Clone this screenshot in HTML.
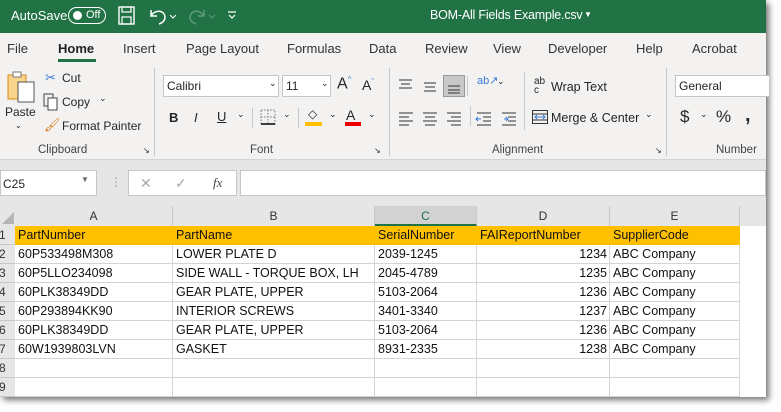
<!DOCTYPE html>
<html><head><style>
*{margin:0;padding:0;box-sizing:border-box}
body{width:781px;height:412px;background:#fff;font-family:"Liberation Sans",sans-serif;position:relative;overflow:hidden;font-size:12px;color:#262626}
.win{position:absolute;left:0;top:0;width:766px;height:397px;background:#e6e6e6;box-shadow:3px 3px 6px rgba(0,0,0,.55)}
.title{position:absolute;left:0;top:0;width:766px;height:33px;background:#217346;color:#fff}
.a{position:absolute;white-space:nowrap}
.tabs{position:absolute;top:33px;left:0;width:766px;height:31px;background:#f3f2f1;font-size:13px;color:#333}
.ribbon{position:absolute;top:64px;left:0;width:766px;height:96px;background:#f3f2f1;border-bottom:1px solid #d4d4d4}
.sep{position:absolute;width:1px;background:#c8c8c8}
.lbl{position:absolute;top:80px;font-size:11.5px;color:#444}
.box{position:absolute;background:#fff;border:1px solid #c6c6c6}
.ch{position:absolute;top:206px;height:20px;background:#e6e6e6;border-right:1px solid #c8c8c8;text-align:center;font-size:12px;line-height:20px;color:#333}
.row{position:absolute;left:15px;width:725px;height:19px;border-bottom:1px solid #d4d4d4;background:#fff}
.c{position:absolute;top:0;height:19px;line-height:19px;font-size:12.5px;padding-left:3px;border-right:1px solid #d4d4d4;color:#111;white-space:nowrap;overflow:hidden}
.rh{position:absolute;left:0;width:15px;height:19px;background:#e6e6e6;font-size:12px;line-height:19px;color:#333;border-bottom:1px solid #c8c8c8;text-indent:-1px}
</style></head><body>
<div class="win">
<div class="title">
<span class="a" style="left:11px;top:8px;font-size:13px">AutoSave</span>
<span class="a" style="left:68px;top:7px;width:38px;height:17px;border:1.5px solid #fff;border-radius:9px"></span>
<span class="a" style="left:73px;top:11px;width:9px;height:9px;border-radius:50%;background:#fff"></span>
<span class="a" style="left:86px;top:9px;font-size:11px;line-height:13px">Off</span>
<svg class="a" style="left:118px;top:6px" width="18" height="20"><rect x="1" y="1" width="15" height="17" fill="none" stroke="#fff" stroke-width="1.4"/><rect x="4" y="1" width="9" height="5" fill="none" stroke="#fff" stroke-width="1.2"/><rect x="4" y="11" width="9" height="7" fill="none" stroke="#fff" stroke-width="1.2"/></svg>
<svg class="a" style="left:148px;top:6px" width="30" height="20"><path d="M3 4v6h6M3 10c3-6 13-7 14 1 0 4-3 6-6 7" fill="none" stroke="#fff" stroke-width="1.5"/><path d="M22 9l3 3 3-3" fill="none" stroke="#fff"/></svg>
<svg class="a" style="left:187px;top:6px" width="30" height="20"><path d="M17 4v6h-6M17 10c-3-6-13-7-14 1 0 4 3 6 6 7" fill="none" stroke="#5c9a7a" stroke-width="1.5"/><path d="M22 9l3 3 3-3" fill="none" stroke="#5c9a7a"/></svg>
<svg class="a" style="left:227px;top:10px" width="10" height="10"><path d="M1 2h8M2 5l3 3 3-3" fill="none" stroke="#fff" stroke-width="1.2"/></svg>
<span class="a" style="left:430px;top:8px;font-size:12.5px;letter-spacing:-0.2px">BOM-All Fields Example.csv</span>
<span class="a" style="left:584px;top:10px;font-size:8px">▼</span>
</div>
<div class="tabs">
<span class="a" style="left:7px;top:8px">File</span>
<span class="a" style="left:58px;top:8px;font-weight:bold;color:#222">Home</span>
<span class="a" style="left:58px;top:26px;width:38px;height:3px;background:#217346"></span>
<span class="a" style="left:123px;top:8px">Insert</span>
<span class="a" style="left:186px;top:8px">Page Layout</span>
<span class="a" style="left:287px;top:8px">Formulas</span>
<span class="a" style="left:369px;top:8px">Data</span>
<span class="a" style="left:425px;top:8px">Review</span>
<span class="a" style="left:493px;top:8px">View</span>
<span class="a" style="left:548px;top:8px">Developer</span>
<span class="a" style="left:636px;top:8px">Help</span>
<span class="a" style="left:692px;top:8px">Acrobat</span>
</div>
<div class="ribbon">
<svg class="a" style="left:6px;top:6px" width="30" height="36"><rect x="2" y="5" width="18" height="24" fill="#f8d58a" stroke="#d98a1c"/><rect x="7" y="2" width="8" height="5" fill="#fff" stroke="#777"/><rect x="12" y="12" width="16" height="20" fill="#fff" stroke="#555"/></svg>
<span class="a" style="left:5px;top:41px;font-size:12px">Paste</span>
<span class="a" style="left:15px;top:57px;font-size:8px">⌄</span>
<span class="a" style="left:45px;top:6px;font-size:13px;color:#3a7bd5">✂</span>
<span class="a" style="left:62px;top:7px">Cut</span>
<svg class="a" style="left:43px;top:29px" width="16" height="18"><rect x="1" y="1" width="9" height="12" fill="none" stroke="#444"/><rect x="5" y="5" width="9" height="12" fill="#fff" stroke="#444"/></svg>
<span class="a" style="left:62px;top:31px">Copy</span>
<span class="a" style="left:99px;top:29px;font-size:9px">⌄</span>
<span class="a" style="left:44px;top:53px;font-size:13px;color:#e07b1c">🖌</span>
<span class="a" style="left:62px;top:55px">Format Painter</span>
<span class="lbl" style="left:38px">Clipboard</span>
<span class="a" style="left:143px;top:82px;font-size:8px">↘</span>
<div class="sep" style="left:154px;top:4px;height:88px"></div>
<div class="box" style="left:163px;top:11px;width:116px;height:22px"><span class="a" style="left:3px;top:3px">Calibri</span><span class="a" style="left:105px;top:2px;font-size:9px">⌄</span></div>
<div class="box" style="left:282px;top:11px;width:49px;height:22px"><span class="a" style="left:3px;top:3px">11</span><span class="a" style="left:38px;top:2px;font-size:9px">⌄</span></div>
<span class="a" style="left:337px;top:11px;font-size:16px">A<sup style="font-size:8px;color:#3a7bd5">^</sup></span>
<span class="a" style="left:362px;top:13px;font-size:14px">A<sup style="font-size:8px;color:#3a7bd5">ˇ</sup></span>
<span class="a" style="left:169px;top:46px;font-weight:bold;font-size:13px">B</span>
<span class="a" style="left:194px;top:46px;font-style:italic;font-size:13px">I</span>
<span class="a" style="left:217px;top:45px;text-decoration:underline;font-size:13px">U</span>
<span class="a" style="left:237px;top:45px;font-size:9px">⌄</span>
<div class="sep" style="left:252px;top:44px;height:20px"></div>
<svg class="a" style="left:260px;top:45px" width="16" height="16"><rect x="1" y="1" width="14" height="14" fill="none" stroke="#777" stroke-dasharray="1.5 1.5"/><path d="M1 15h14" stroke="#000" stroke-width="1.5"/><path d="M8 1v14M1 8h14" stroke="#777" stroke-dasharray="1.5 1.5"/></svg>
<span class="a" style="left:283px;top:45px;font-size:9px">⌄</span>
<div class="sep" style="left:298px;top:44px;height:20px"></div>
<span class="a" style="left:308px;top:43px;font-size:12px">◇</span>
<span class="a" style="left:305px;top:58px;width:17px;height:4px;background:#ffc000"></span>
<span class="a" style="left:329px;top:45px;font-size:9px">⌄</span>
<span class="a" style="left:346px;top:43px;font-size:14px">A</span>
<span class="a" style="left:345px;top:58px;width:16px;height:4px;background:#e00"></span>
<span class="a" style="left:368px;top:45px;font-size:9px">⌄</span>
<span class="lbl" style="left:250px">Font</span>
<span class="a" style="left:374px;top:82px;font-size:8px">↘</span>
<div class="sep" style="left:389px;top:4px;height:88px"></div>
<svg class="a" style="left:398px;top:11px" width="122" height="60"><path d="M1 5h13M3 9h9M1 13h13M26 8h12M27 12h10M26 16h12" stroke="#333"/><rect x="45.5" y="0.5" width="21" height="21" fill="#c8c8c8" stroke="#999"/><path d="M50 11h12M50 15h12M50 18h12" stroke="#333"/>
<path d="M1 38h14M1 42h10M1 46h14M1 50h10M25 38h14M27 42h10M25 46h14M27 50h10M49 38h14M53 42h10M49 46h14M53 50h10M79 38h14M79 50h14M85 42h8M85 46h8M104 38h14M104 50h14M110 42h8M110 46h8" stroke="#333"/><path d="M83 44h-5M80 42l-2 2 2 2M106 44h4M108 42l2 2-2 2" stroke="#3a7bd5" fill="none"/></svg>
<div class="sep" style="left:467px;top:12px;height:20px"></div>
<div class="sep" style="left:470px;top:42px;height:20px"></div>
<span class="a" style="left:477px;top:10px;font-size:11px;color:#3a7bd5">ab↗</span>
<span class="a" style="left:497px;top:12px;font-size:9px">⌄</span>
<div class="sep" style="left:524px;top:8px;height:58px"></div>
<span class="a" style="left:534px;top:13px;font-size:10px;line-height:9px">ab<br>c</span>
<span class="a" style="left:551px;top:16px;font-size:12.5px">Wrap Text</span>
<svg class="a" style="left:532px;top:46px" width="16" height="14"><rect x="0.5" y="0.5" width="15" height="13" fill="none" stroke="#333"/><path d="M0 4h16M0 10h16" stroke="#333"/><path d="M3 7h10M5 5l-2 2 2 2M11 5l2 2-2 2" stroke="#3a7bd5" fill="none"/></svg>
<span class="a" style="left:551px;top:47px;font-size:12.5px">Merge &amp; Center</span>
<span class="a" style="left:645px;top:45px;font-size:9px">⌄</span>
<span class="lbl" style="left:492px">Alignment</span>
<span class="a" style="left:655px;top:82px;font-size:8px">↘</span>
<div class="sep" style="left:666px;top:4px;height:88px"></div>
<div class="box" style="left:675px;top:11px;width:95px;height:22px"><span class="a" style="left:3px;top:3px">General</span></div>
<span class="a" style="left:680px;top:43px;font-size:17px">$</span>
<span class="a" style="left:700px;top:45px;font-size:9px">⌄</span>
<span class="a" style="left:716px;top:43px;font-size:17px">%</span>
<span class="a" style="left:745px;top:40px;font-size:20px;font-weight:bold">,</span>
<span class="lbl" style="left:716px">Number</span>
</div>
<div class="box" style="left:0;top:170px;width:97px;height:26px;border-color:#c6c6c6"><span class="a" style="left:2px;top:6px">C25</span><span class="a" style="left:80px;top:4px;font-size:8px;color:#666">▼</span></div>
<span class="a" style="left:110px;top:175px;color:#999">⋮</span>
<div class="box" style="left:128px;top:170px;width:109px;height:26px"><span class="a" style="left:11px;top:4px;color:#aaa;font-size:14px">✕</span><span class="a" style="left:46px;top:4px;color:#aaa;font-size:14px">✓</span><span class="a" style="left:84px;top:4px;font-style:italic;font-family:'Liberation Serif',serif;font-size:13px;color:#444">fx</span></div>
<div class="box" style="left:240px;top:170px;width:526px;height:26px"></div>
<svg class="a" style="left:2px;top:212px" width="12" height="12"><path d="M12 0V12H0Z" fill="#b5b5b5"/></svg>
<div class="ch" style="left:15px;width:158px">A</div>
<div class="ch" style="left:173px;width:202px">B</div>
<div class="ch" style="left:375px;width:102px;background:#d2d2d2;color:#217346;border-bottom:2px solid #217346">C</div>
<div class="ch" style="left:477px;width:133px">D</div>
<div class="ch" style="left:610px;width:130px">E</div>
<div class="ch" style="left:740px;width:26px;border-right:none"></div>

<div class="rh" style="top:226px">1</div><div class="row" style="top:226px;background:#ffc000;border-bottom-color:#ffc000">
<div class="c" style="left:0;width:158px;border-color:#ffc000">PartNumber</div><div class="c" style="left:158px;width:202px;border-color:#ffc000">PartName</div><div class="c" style="left:360px;width:102px;border-color:#ffc000">SerialNumber</div><div class="c" style="left:462px;width:133px;border-color:#ffc000">FAIReportNumber</div><div class="c" style="left:595px;width:130px;border-color:#ffc000">SupplierCode</div></div>

<div class="rh" style="top:245px">2</div><div class="row" style="top:245px"><div class="c" style="left:0;width:158px">60P533498M308</div><div class="c" style="left:158px;width:202px">LOWER PLATE D</div><div class="c" style="left:360px;width:102px">2039-1245</div><div class="c" style="left:462px;width:133px;text-align:right;padding-right:2px">1234</div><div class="c" style="left:595px;width:130px">ABC Company</div></div>
<div class="rh" style="top:264px">3</div><div class="row" style="top:264px"><div class="c" style="left:0;width:158px">60P5LLO234098</div><div class="c" style="left:158px;width:202px">SIDE WALL - TORQUE BOX, LH</div><div class="c" style="left:360px;width:102px">2045-4789</div><div class="c" style="left:462px;width:133px;text-align:right;padding-right:2px">1235</div><div class="c" style="left:595px;width:130px">ABC Company</div></div>
<div class="rh" style="top:283px">4</div><div class="row" style="top:283px"><div class="c" style="left:0;width:158px">60PLK38349DD</div><div class="c" style="left:158px;width:202px">GEAR PLATE, UPPER</div><div class="c" style="left:360px;width:102px">5103-2064</div><div class="c" style="left:462px;width:133px;text-align:right;padding-right:2px">1236</div><div class="c" style="left:595px;width:130px">ABC Company</div></div>
<div class="rh" style="top:302px">5</div><div class="row" style="top:302px"><div class="c" style="left:0;width:158px">60P293894KK90</div><div class="c" style="left:158px;width:202px">INTERIOR SCREWS</div><div class="c" style="left:360px;width:102px">3401-3340</div><div class="c" style="left:462px;width:133px;text-align:right;padding-right:2px">1237</div><div class="c" style="left:595px;width:130px">ABC Company</div></div>
<div class="rh" style="top:321px">6</div><div class="row" style="top:321px"><div class="c" style="left:0;width:158px">60PLK38349DD</div><div class="c" style="left:158px;width:202px">GEAR PLATE, UPPER</div><div class="c" style="left:360px;width:102px">5103-2064</div><div class="c" style="left:462px;width:133px;text-align:right;padding-right:2px">1236</div><div class="c" style="left:595px;width:130px">ABC Company</div></div>
<div class="rh" style="top:340px">7</div><div class="row" style="top:340px"><div class="c" style="left:0;width:158px">60W1939803LVN</div><div class="c" style="left:158px;width:202px">GASKET</div><div class="c" style="left:360px;width:102px">8931-2335</div><div class="c" style="left:462px;width:133px;text-align:right;padding-right:2px">1238</div><div class="c" style="left:595px;width:130px">ABC Company</div></div>
<div class="rh" style="top:359px">8</div><div class="row" style="top:359px"><div class="c" style="left:0;width:158px"></div><div class="c" style="left:158px;width:202px"></div><div class="c" style="left:360px;width:102px"></div><div class="c" style="left:462px;width:133px"></div><div class="c" style="left:595px;width:130px"></div></div>
<div class="rh" style="top:378px">9</div><div class="row" style="top:378px"><div class="c" style="left:0;width:158px"></div><div class="c" style="left:158px;width:202px"></div><div class="c" style="left:360px;width:102px"></div><div class="c" style="left:462px;width:133px"></div><div class="c" style="left:595px;width:130px"></div></div>
<div class="a" style="left:740px;top:226px;width:26px;height:171px;background:#fff"></div>
</div>
</body></html>
